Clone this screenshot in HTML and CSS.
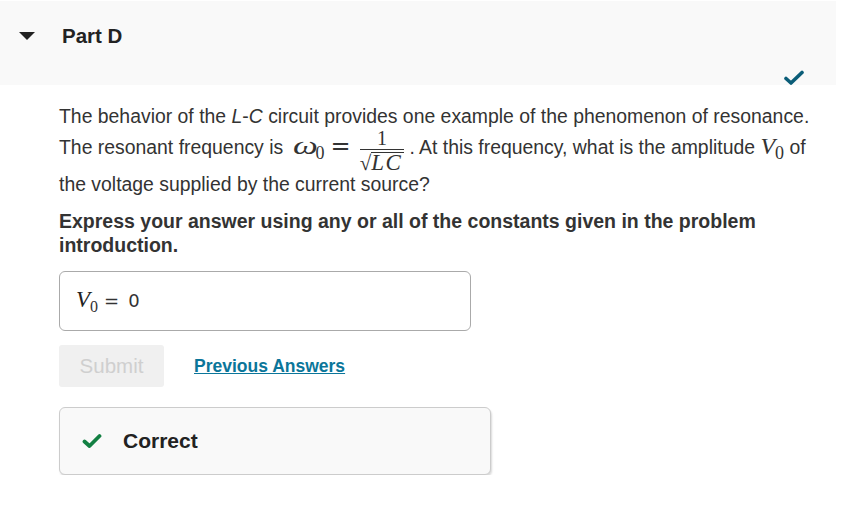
FILE: index.html
```html
<!DOCTYPE html>
<html>
<head>
<meta charset="utf-8">
<link rel="stylesheet" href="styles.css">
</head>
<body>
<div class="part-header">
  <span class="caret"></span>
  <h2 class="part-title">Part D</h2>
</div>
<div class="status-row">
  <svg class="status-check" viewBox="0 0 20 16" width="20" height="16"><path d="M2 8.5 L7 13 L18 2.5" fill="none" stroke="#0b5d78" stroke-width="3.6" stroke-linecap="round" stroke-linejoin="round"/></svg>
</div>
<div class="content">
  <p class="question">The behavior of the <i>L</i>-<i>C</i> circuit provides one example of the phenomenon of resonance. The resonant frequency is <span class="math"><span class="mi omega">ω</span><sub class="msub">0</sub><span class="mo">=</span><span class="frac"><span class="num">1</span><span class="den"><span class="sqrt">√</span><span class="rad">LC</span></span></span></span>. At this frequency, what is the amplitude <span class="math"><span class="mi">V</span><sub class="msub">0</sub></span> of the voltage supplied by the current source?</p>
  <p class="instructions">Express your answer using any or all of the constants given in the problem introduction.</p>
  <div class="answer-box">
    <span class="math"><span class="mi">V</span><sub class="msub">0</sub></span>
    <span class="eq">=</span>
    <span class="ans-val">0</span>
  </div>
  <div class="actions">
    <button class="submit" disabled>Submit</button>
    <a class="prev" href="#">Previous Answers</a>
  </div>
  <div class="feedback">
    <svg class="fb-check" viewBox="0 0 20 16" width="20" height="16"><path d="M2.5 8.5 L7.5 13 L17.5 3" fill="none" stroke="#138043" stroke-width="3.8" stroke-linecap="round" stroke-linejoin="round"/></svg>
    <span class="fb-text">Correct</span>
  </div>
</div>
</body>
</html>
```

FILE: styles.css
```css
html, body {
  margin: 0;
  padding: 0;
  background: #ffffff;
  font-family: "Liberation Sans", Arial, sans-serif;
  color: #333333;
}
.part-header {
  width: 836px;
  height: 84px;
  margin-top: 1px;
  background: #f9f9f9;
  display: flex;
  align-items: flex-start;
  padding-top: 23px;
  box-sizing: border-box;
}
.caret {
  width: 0;
  height: 0;
  border-left: 8px solid transparent;
  border-right: 8px solid transparent;
  border-top: 8px solid #222;
  margin-left: 19px;
  margin-top: 8px;
}
.part-title {
  margin: 0 0 0 27px;
  font-size: 20.5px;
  font-weight: bold;
  color: #222;
  line-height: 24px;
}
.status-row {
  position: absolute;
  top: 70px;
  left: 784px;
}
.status-check { display: block; }
.content {
  padding-left: 59px;
  padding-top: 16px;
}
.question {
  margin: 0;
  width: 758px;
  font-size: 19.4px;
  line-height: 30px;
}
.math {
  font-family: "Liberation Serif", "DejaVu Serif", serif;
  white-space: nowrap;
}
.mi { font-style: italic; font-size: 24px; }
.omega {
  display: inline-block;
  width: 23px;
  font-size: 26px;
  margin-left: 4px;
  line-height: 20px;
  transform: scaleX(1.35);
  transform-origin: left center;
}
.msub { font-style: normal; font-size: 18px; vertical-align: -5px; line-height: 0; }
.mo { font-style: normal; font-size: 24px; margin: 0 9px 0 6px; line-height: 0; font-family: "DejaVu Serif", serif; }
.frac {
  display: inline-flex;
  flex-direction: column;
  align-items: center;
  vertical-align: 9px;
  margin: 0 5px 0 0;
  line-height: 13px;
}
.num { font-size: 20px; border-bottom: 1px solid #333; padding: 0 3px 4px; align-self: stretch; text-align: center; line-height: 13px; }
.den { display: inline-flex; align-items: flex-end; font-size: 21px; padding-top: 2px; margin-bottom: -4px; }
.sqrt { font-size: 21px; line-height: 20px; }
.rad { border-top: 1px solid #333; line-height: 20px; font-style: italic; font-size: 23px; letter-spacing: 1.5px; padding-right: 2px; }
.instructions {
  margin: 10px 0 0;
  width: 760px;
  font-size: 19.5px;
  font-weight: bold;
  line-height: 24px;
}
.answer-box {
  margin-top: 14px;
  width: 412px;
  height: 60px;
  box-sizing: border-box;
  border: 1px solid #aaaaaa;
  border-radius: 6px;
  display: flex;
  align-items: center;
  padding-left: 16px;
  padding-bottom: 2px;
}
.answer-box .mi { font-size: 23px; color: #222; }
.answer-box .msub { font-size: 16px; }
.eq { font-size: 18px; margin: 0 9px 0 6px; font-family: "DejaVu Sans", sans-serif; }
.ans-val { font-size: 18px; font-family: "DejaVu Sans", sans-serif; }
.actions {
  margin-top: 14px;
  display: flex;
  align-items: center;
}
.submit {
  width: 105px;
  height: 42px;
  border: none;
  border-radius: 3px;
  background: #f0f0f0;
  color: #cfcfcf;
  font-family: "Liberation Sans", Arial, sans-serif;
  font-size: 20.5px;
  padding: 0;
}
.prev {
  margin-left: 30px;
  color: #0b769a;
  font-weight: bold;
  font-size: 17.5px;
  text-decoration: underline;
}
.feedback {
  margin-top: 20px;
  width: 432px;
  height: 68px;
  box-sizing: border-box;
  border: 1px solid #cccccc;
  border-radius: 6px;
  background: #f9f9f9;
  box-shadow: 1px 2px 2px rgba(0,0,0,0.15);
  display: flex;
  align-items: center;
  padding-left: 22px;
}
.fb-check { display: block; }
.fb-text {
  margin-left: 21px;
  font-size: 21px;
  font-weight: bold;
  color: #222;
}
```
